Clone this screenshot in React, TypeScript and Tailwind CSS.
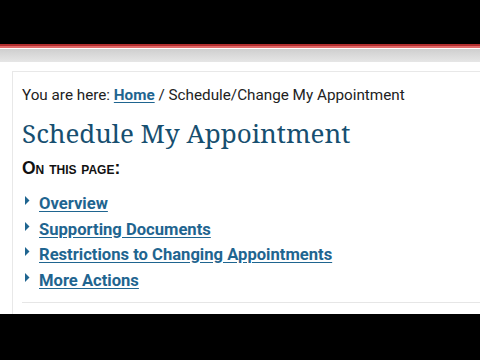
export default function App() {
  const links = [
    "Overview",
    "Supporting Documents",
    "Restrictions to Changing Appointments",
    "More Actions",
  ];

  return (
    <div className="w-[480px] h-[360px] overflow-hidden bg-white flex flex-col font-['Roboto',sans-serif]">
      <div className="h-[44px] bg-black shrink-0" />
      <div className="h-[2px] bg-[#b22f2f] shrink-0" />
      <div className="h-[2px] bg-[#e26a6a] shrink-0" />
      <div className="h-[1px] bg-white shrink-0" />
      <div className="h-[13px] bg-gradient-to-b from-[#cfcfcf] to-[#e6e6e6] shrink-0" />
      <div className="flex-1 pt-[9px] pl-[12px] min-h-0">
        <div className="h-full border-l border-t border-[#e8e8e8] pl-[9px] pt-[13px]">
          <p className="text-[15.25px] leading-[20px] text-[#222]">
            You are here:{" "}
            <a className="font-bold text-[#1f6590] underline underline-offset-2">Home</a> / Schedule/Change My Appointment
          </p>
          <h1 className="mt-[11px] text-[26px] leading-[34px] text-[#174f70] font-['Noto_Serif','DejaVu_Serif',serif]">
            Schedule My Appointment
          </h1>
          <p className="mt-[8px] text-[17.5px] leading-[20px] font-bold text-[#111] font-['Liberation_Sans',sans-serif] [font-variant:small-caps]">
            On this page:
          </p>
          <ul className="mt-[16px] flex flex-col">
            {links.map((l) => (
              <li key={l} className="flex items-start h-[25.5px]">
                <svg width="5" height="9" viewBox="0 0 5 9" className="mt-[2px] ml-[3px] mr-[9px] shrink-0">
                  <path d="M0 0 L4.5 4.5 L0 9 Z" fill="#1f6590" />
                </svg>
                <a className="text-[16.6px] leading-[20px] font-bold text-[#1f6590] underline underline-offset-2">
                  {l}
                </a>
              </li>
            ))}
          </ul>
          <div className="mt-[6px] border-t border-[#e6e6e6]" />
        </div>
      </div>
      <div className="h-[46px] bg-black shrink-0" />
    </div>
  );
}
